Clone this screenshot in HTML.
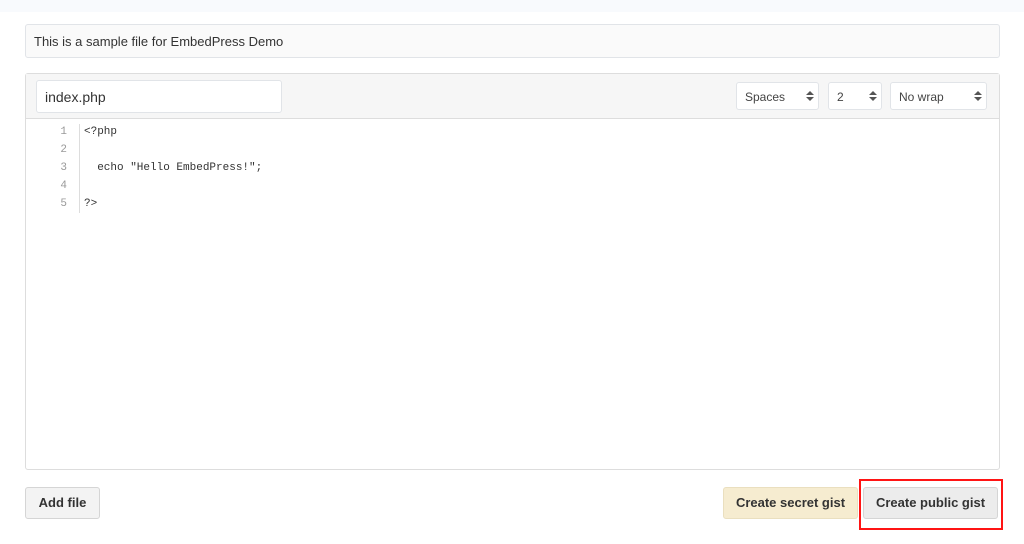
<!DOCTYPE html><html><head><style>
body{margin:0;width:1024px;height:544px;background:#fff;font-family:"Liberation Sans",sans-serif;position:relative;overflow:hidden}
.a{position:absolute;box-sizing:border-box}
.sel{border:1px solid #e1e4e8;border-radius:3px;background:#fff;font-size:12px;color:#444;padding:7px 8px;height:28px;top:82px}
.arr{position:absolute;right:8px;top:8px;width:0;height:0}
.arr:before{content:"";position:absolute;left:-4px;top:0;border:4px solid transparent;border-bottom:4px solid #555;border-top:0}
.arr:after{content:"";position:absolute;left:-4px;top:6px;border:4px solid transparent;border-top:4px solid #555;border-bottom:0}
.ln{position:absolute;left:55px;width:12px;text-align:right;font:11px "Liberation Mono",monospace;color:#999}
.cd{position:absolute;left:84px;font:11px "Liberation Mono",monospace;color:#333}
.btn{font-weight:bold;font-size:13px;color:#333;border:1px solid #d5d5d5;border-radius:3px;text-align:center;line-height:30px;height:32px;top:487px}
</style></head><body>
<div class="a" style="left:0;top:0;width:1024px;height:12px;background:#f8fafd"></div>
<div class="a" style="left:25px;top:24px;width:975px;height:34px;background:#fafafa;border:1px solid #e1e4e8;border-radius:3px;font-size:13px;color:#333;padding:9px 8px">This is a sample file for EmbedPress Demo</div>
<div class="a" style="left:25px;top:73px;width:975px;height:397px;border:1px solid #ddd;border-radius:3px;background:#fff"></div>
<div class="a" style="left:26px;top:74px;width:973px;height:45px;background:#f6f6f6;border-bottom:1px solid #ddd"></div>
<div class="a" style="left:36px;top:80px;width:246px;height:33px;background:#fff;border:1px solid #e1e4e8;border-radius:3px;font-size:14px;color:#333;padding:8px 8px">index.php</div>
<div class="a sel" style="left:736px;width:83px">Spaces<span class="arr"></span></div>
<div class="a sel" style="left:828px;width:54px">2<span class="arr"></span></div>
<div class="a sel" style="left:890px;width:97px">No wrap<span class="arr"></span></div>
<div class="a" style="left:79px;top:124px;width:1px;height:89px;background:#ddd"></div>
<div class="ln" style="top:126px">1</div><div class="cd" style="top:126px">&lt;?php</div>
<div class="ln" style="top:144px">2</div>
<div class="ln" style="top:162px">3</div><div class="cd" style="top:162px">&nbsp;&nbsp;echo "Hello EmbedPress!";</div>
<div class="ln" style="top:180px">4</div>
<div class="ln" style="top:198px">5</div><div class="cd" style="top:198px">?&gt;</div>
<div class="a btn" style="left:25px;width:75px;background:#f3f3f3">Add file</div>
<div class="a btn" style="left:723px;width:135px;background:#f6ecd0;border-color:#eadfbf">Create secret gist</div>
<div class="a" style="left:859px;top:479px;width:144px;height:51px;border:2px solid #ff1414"></div>
<div class="a btn" style="left:863px;width:135px;background:#ececec">Create public gist</div>
</body></html>
